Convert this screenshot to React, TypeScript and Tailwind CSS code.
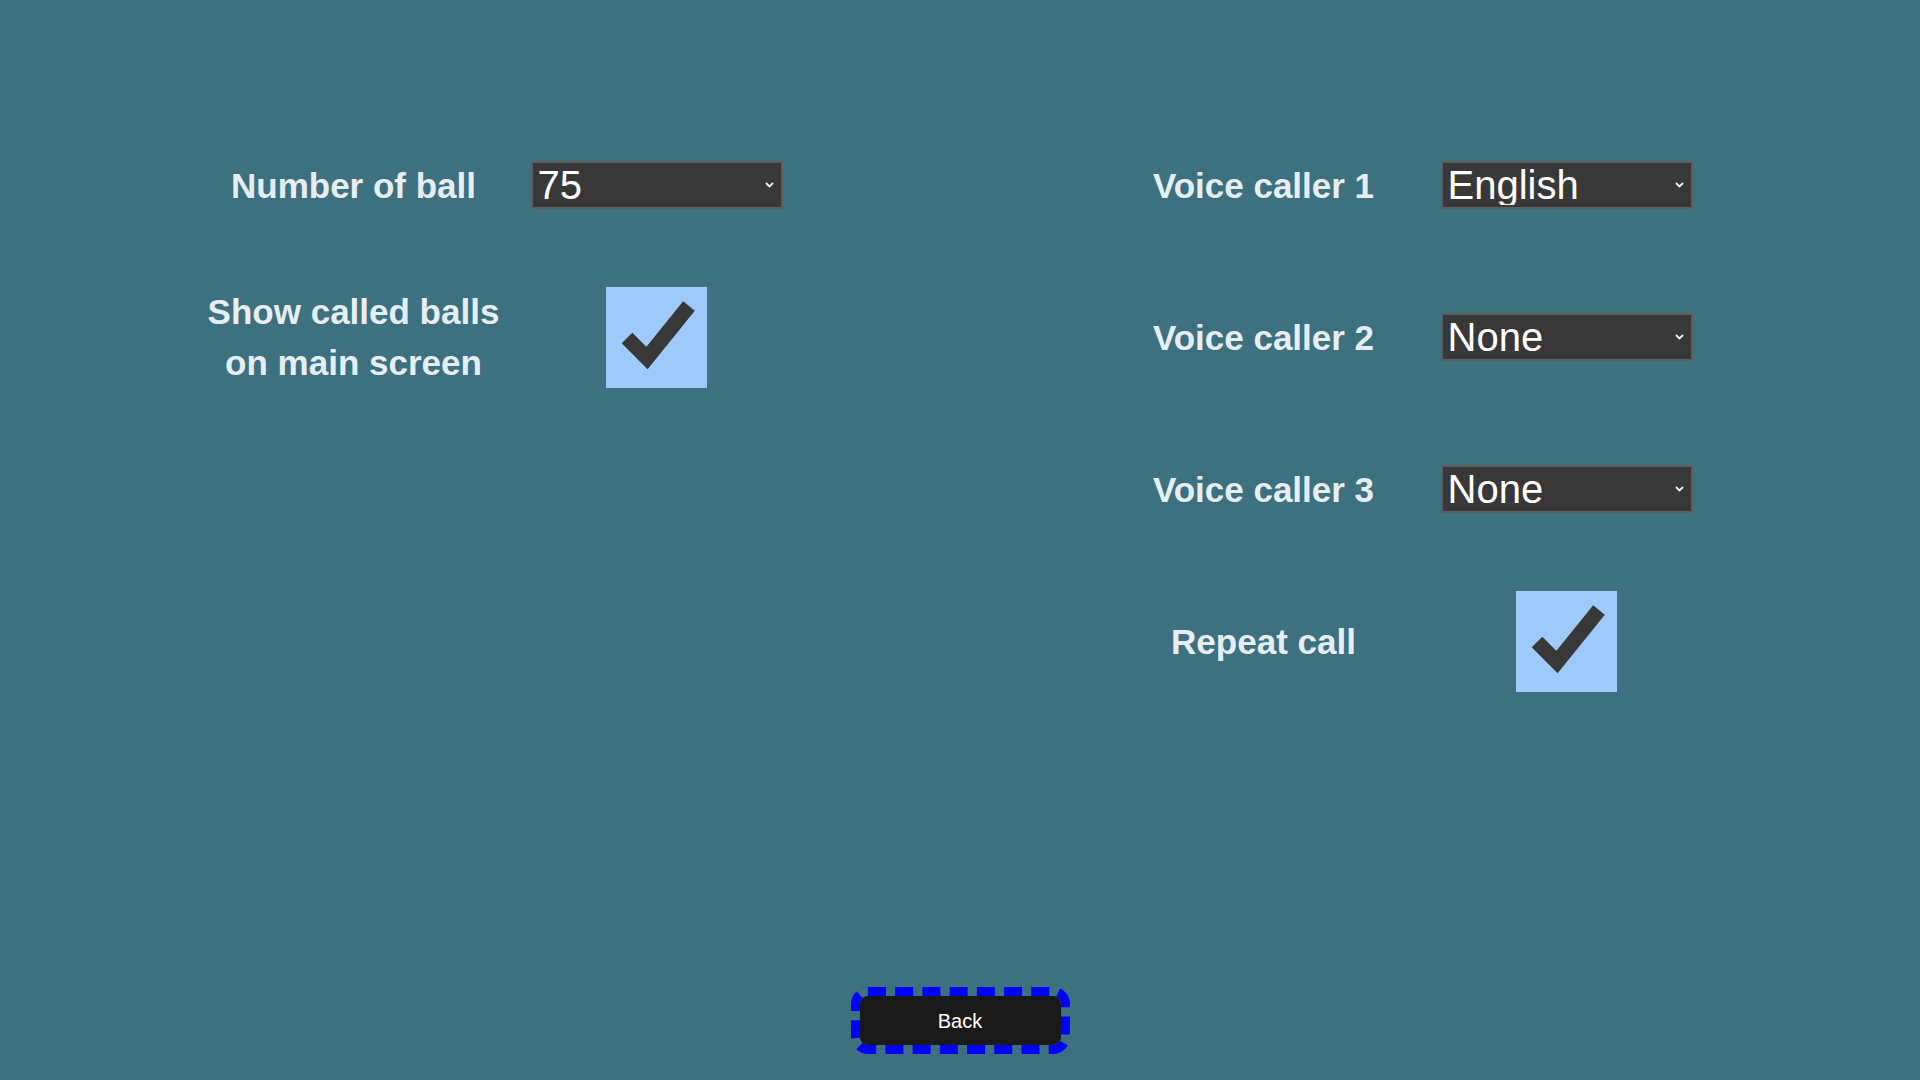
import React, { useState } from "react";

const font = { fontFamily: '"Liberation Sans", Arial, sans-serif' };

const Select = ({ value, options }: { value: string; options: string[] }) => {
  const [v, setV] = useState(value);
  return (
    <div className="relative w-[252px] h-[48px]">
      <select
        value={v}
        onChange={(e) => setV(e.target.value)}
        className="appearance-none w-full h-full bg-[#383838] text-white text-[40px] leading-none pl-[5px] border-2 border-[#5c5c5c] rounded-[2px] outline-none"
        style={font}
      >
        {options.map((o) => (
          <option key={o} value={o}>
            {o}
          </option>
        ))}
      </select>
      <svg
        className="absolute right-[9px] top-[21px] pointer-events-none"
        width="9"
        height="6"
        viewBox="0 0 9 6"
      >
        <path d="M1 1 L4.5 4.5 L8 1" stroke="#f2f2f2" strokeWidth="1.8" fill="none" />
      </svg>
    </div>
  );
};

const Check = () => {
  const [on, setOn] = useState(true);
  return (
    <button
      onClick={() => setOn(!on)}
      className="w-[101px] h-[101px] bg-[#9dcafb] flex items-center justify-center"
    >
      {on && (
        <svg width="101" height="101" viewBox="0 0 101 101">
          <polyline
            points="21,51 41,71 83,19"
            stroke="#383838"
            strokeWidth="15"
            fill="none"
            strokeLinecap="butt"
            strokeLinejoin="miter"
          />
        </svg>
      )}
    </button>
  );
};

const Label = ({ children }: { children: React.ReactNode }) => (
  <div
    className="text-[#e7eef1] text-[35px] font-bold leading-[51px] text-center"
    style={font}
  >
    {children}
  </div>
);

export default function App() {
  const langs = ["None", "English", "Français", "Español"];
  return (
    <div className="w-full h-screen bg-[#3d717f] flex flex-col overflow-hidden" style={font}>
      <div className="flex justify-center gap-[304px] pt-[109px]">
        {/* left side */}
        <div className="grid grid-cols-[303px_303px] auto-rows-[152px] items-center justify-items-center">
          <Label>Number of ball</Label>
          <Select value="75" options={["75", "90"]} />
          <Label>
            Show called balls
            <br />
            on main screen
          </Label>
          <Check />
        </div>

        {/* right side */}
        <div className="grid grid-cols-[303px_303px] auto-rows-[152px] items-center justify-items-center">
          <Label>Voice caller 1</Label>
          <Select value="English" options={langs} />
          <Label>Voice caller 2</Label>
          <Select value="None" options={langs} />
          <Label>Voice caller 3</Label>
          <Select value="None" options={langs} />
          <Label>Repeat call</Label>
          <Check />
        </div>
      </div>

      <div className="mt-auto flex justify-center pb-[35px]">
        <button className="w-[201px] h-[49px] bg-[#1a1a1a] text-white text-[20px] rounded-[8px] outline-[9px] outline-dashed outline-[#0000ff]">
          Back
        </button>
      </div>
    </div>
  );
}
